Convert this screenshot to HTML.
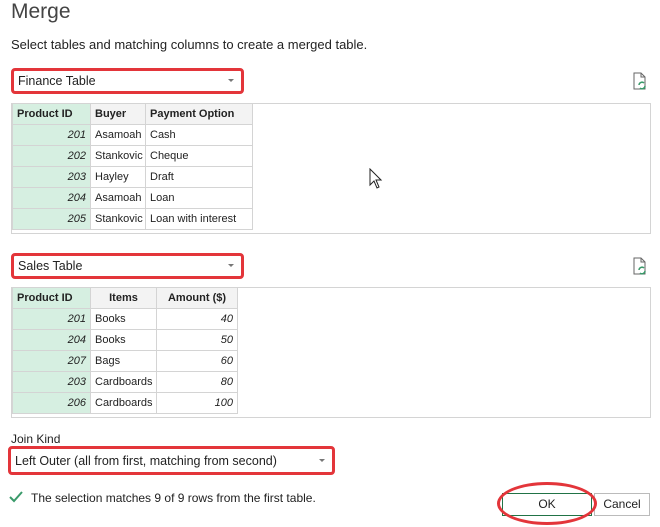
<!DOCTYPE html>
<html><head><style>
body{margin:0;width:660px;height:527px;background:#fff;font-family:"Liberation Sans",sans-serif;color:#222;position:relative;overflow:hidden;font-size:12px}
.a{position:absolute}
.dd{position:absolute;border:3px solid #e3353a;border-radius:4px;background:#fff;box-sizing:border-box}
.dd span{position:absolute;left:4px;top:3px;font-size:12.5px}
.dd i{position:absolute;right:7px;top:8px;width:0;height:0;border-left:3px solid transparent;border-right:3px solid transparent;border-top:3px solid #777}
.panel{position:absolute;left:11px;width:640px;height:131px;border:1px solid #d4d4d4;box-sizing:border-box}
table{border-collapse:collapse;position:absolute;left:0;top:0;table-layout:fixed}
td{border:1px solid #d4d4d4;height:21px;padding:0 4px;font-size:11px;white-space:nowrap;box-sizing:border-box;overflow:hidden}
tr:first-child td{background:#f3f3f3;font-weight:bold}
td.k{background:#d6efe1;text-align:right;font-style:italic}
tr:first-child td.k{background:#d6efe1;text-align:left;font-style:normal}
td.r{text-align:right;font-style:italic}
</style></head><body>
<div class="a" style="left:11px;top:0px;font-size:21px;color:#444">Merge</div>
<div class="a" style="left:11px;top:37px;font-size:13px">Select tables and matching columns to create a merged table.</div>

<div class="dd" style="left:11px;top:68px;width:233px;height:26px"><span>Finance Table</span><i></i></div>
<svg class="a" style="left:633px;top:72px" width="16" height="20" viewBox="0 0 16 20"><path d="M1 1H8L12 5V17H1Z" fill="none" stroke="#666"/><path d="M8 1V5H12" fill="none" stroke="#666"/><path d="M6 13a3 3 0 0 1 5-2M12 14a3 3 0 0 1-5 2" fill="none" stroke="#3a9a6a" stroke-width="1.5"/></svg>
<div class="panel" style="top:103px">
<table style="left:0;top:-1px;width:240px"><col style="width:78px"><col style="width:55px"><col style="width:107px"><tr><td class="k">Product ID</td><td>Buyer</td><td>Payment Option</td></tr>
<tr><td class="k">201</td><td>Asamoah</td><td>Cash</td></tr>
<tr><td class="k">202</td><td>Stankovic</td><td>Cheque</td></tr>
<tr><td class="k">203</td><td>Hayley</td><td>Draft</td></tr>
<tr><td class="k">204</td><td>Asamoah</td><td>Loan</td></tr>
<tr><td class="k">205</td><td>Stankovic</td><td>Loan with interest</td></tr></table>
</div>
<svg class="a" style="left:369px;top:168px" width="14" height="22" viewBox="0 0 14 22"><path d="M1 1V17L5 13L8 20L10 19L7 12H12Z" fill="#fff" stroke="#222"/></svg>

<div class="dd" style="left:11px;top:253px;width:233px;height:26px"><span>Sales Table</span><i></i></div>
<svg class="a" style="left:633px;top:257px" width="16" height="20" viewBox="0 0 16 20"><path d="M1 1H8L12 5V17H1Z" fill="none" stroke="#666"/><path d="M8 1V5H12" fill="none" stroke="#666"/><path d="M6 13a3 3 0 0 1 5-2M12 14a3 3 0 0 1-5 2" fill="none" stroke="#3a9a6a" stroke-width="1.5"/></svg>
<div class="panel" style="top:287px">
<table style="left:0;top:-1px;width:225px"><col style="width:78px"><col style="width:66px"><col style="width:81px"><tr><td class="k">Product ID</td><td style="text-align:center">Items</td><td style="text-align:center">Amount ($)</td></tr>
<tr><td class="k">201</td><td>Books</td><td class="r">40</td></tr>
<tr><td class="k">204</td><td>Books</td><td class="r">50</td></tr>
<tr><td class="k">207</td><td>Bags</td><td class="r">60</td></tr>
<tr><td class="k">203</td><td>Cardboards</td><td class="r">80</td></tr>
<tr><td class="k">206</td><td>Cardboards</td><td class="r">100</td></tr></table>
</div>

<div class="a" style="left:11px;top:432px;font-size:12px">Join Kind</div>
<div class="dd" style="left:8px;top:446px;width:327px;height:29px"><span style="top:5px">Left Outer (all from first, matching from second)</span><i style="top:10px"></i></div>

<svg class="a" style="left:9px;top:491px" width="14" height="12" viewBox="0 0 14 12"><path d="M1 6L5 10L13 1" fill="none" stroke="#3a9a6a" stroke-width="2"/></svg>
<div class="a" style="left:31px;top:491px;font-size:12px">The selection matches 9 of 9 rows from the first table.</div>

<div class="a" style="left:502px;top:493px;width:90px;height:23px;border:1px solid #217346;box-sizing:border-box;text-align:center;line-height:21px">OK</div>
<div class="a" style="left:594px;top:493px;width:56px;height:23px;border:1px solid #bbb;box-sizing:border-box;text-align:center;line-height:21px">Cancel</div>
<div class="a" style="left:497px;top:482px;width:100px;height:43px;border:3px solid #e3353a;border-radius:50%;box-sizing:border-box"></div>
</body></html>
